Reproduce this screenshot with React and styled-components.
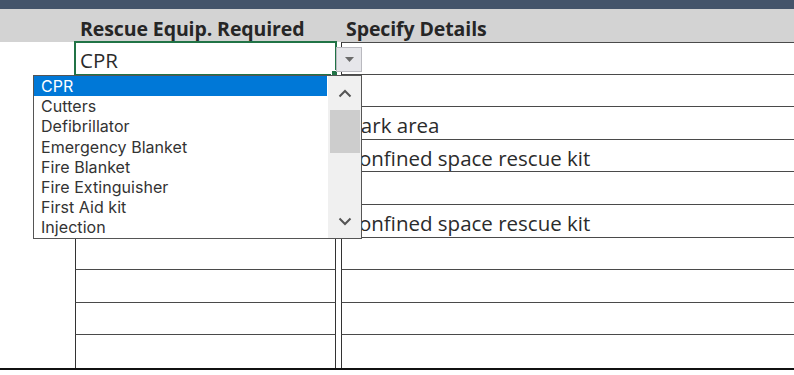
import React from "react";
import styled, { createGlobalStyle } from "styled-components";

const Global = createGlobalStyle`
  html, body { margin: 0; padding: 0; background: #fff; }
  body { font-family: "Open Sans", "Noto Sans", sans-serif; overflow: hidden; }
`;

const Page = styled.div`
  position: relative;
  width: 794px;
  height: 375px;
  overflow: hidden;
  background: #fff;
`;

const TopBar = styled.div`
  height: 9px;
  background: #44546a;
`;

const HeaderBand = styled.div`
  height: 33px;
  background: #d3d3d3;
  display: grid;
  grid-template-columns: 75px 266px 1fr;
  align-items: end;
`;

const HeaderLabel = styled.div`
  grid-column: ${(p) => p.$col};
  padding-left: ${(p) => p.$pad}px;
  font-family: "Open Sans", sans-serif;
  font-weight: 700;
  font-size: 19.5px;
  line-height: 27px;
  letter-spacing: -0.1px;
  color: #262626;
  white-space: nowrap;
`;

const Body = styled.div`
  display: flex;
  flex-direction: column;
`;

const Row = styled.div`
  display: grid;
  grid-template-columns: 75px 261px 5px 1fr;
  height: 32.6px;
`;

const Blank = styled.div``;

const Cell = styled.div`
  position: relative;
  box-sizing: border-box;
  border-bottom: ${(p) => (p.$last ? "none" : "1px solid #4a4a4a")};
  border-top: ${(p) => (p.$first ? "1px solid #4a4a4a" : "none")};
  border-left: 1px solid #333;
  border-right: ${(p) => (p.$right ? "1px solid #333" : "none")};
  display: flex;
  align-items: center;
  padding-left: 4px;
  padding-top: 5px;
  font-family: "Open Sans", sans-serif;
  font-size: 20.5px;
  letter-spacing: 0px;
  color: #2b2b2b;
  white-space: nowrap;
  overflow: hidden;
  ${(p) =>
    p.$active &&
    `outline: 2px solid #217346; outline-offset: -1px; z-index: 2; overflow: visible; padding-top: 3px;`}
`;

const Handle = styled.span`
  position: absolute;
  right: -3px;
  bottom: -3px;
  width: 5px;
  height: 5px;
  background: #217346;
  border: 1px solid #fff;
`;

const BottomRule = styled.div`
  height: 2px;
  background: #111;
`;

const DropButton = styled.div`
  position: absolute;
  left: 336px;
  top: 47px;
  width: 26px;
  height: 25px;
  box-sizing: border-box;
  background: #e6e6ea;
  border: 1px solid #b9b9bf;
  display: flex;
  align-items: center;
  justify-content: center;
  z-index: 3;
`;

const ListBox = styled.div`
  position: absolute;
  left: 33px;
  top: 75px;
  width: 329px;
  height: 164px;
  box-sizing: border-box;
  border: 1px solid #555;
  background: #fff;
  display: flex;
  z-index: 4;
`;

const Items = styled.div`
  flex: 1;
  display: flex;
  flex-direction: column;
`;

const Item = styled.div`
  height: 20.2px;
  line-height: 20.2px;
  padding-left: 7px;
  font-family: Inter, "Open Sans", sans-serif;
  font-size: 16px;
  letter-spacing: 0.05px;
  color: ${(p) => (p.$selected ? "#fff" : "#333")};
  background: ${(p) => (p.$selected ? "#0078d7" : "transparent")};
  margin-right: 1px;
  white-space: nowrap;
`;

const Scrollbar = styled.div`
  width: 33px;
  background: #f0f0f0;
  display: flex;
  flex-direction: column;
  align-items: center;
`;

const ScrollArrow = styled.div`
  height: 34px;
  width: 100%;
  display: flex;
  align-items: center;
  justify-content: center;
`;

const Thumb = styled.div`
  width: 30px;
  height: 43px;
  background: #cdcdcd;
`;

const Track = styled.div`
  flex: 1;
`;

const items = [
  "CPR",
  "Cutters",
  "Defibrillator",
  "Emergency Blanket",
  "Fire Blanket",
  "Fire Extinguisher",
  "First Aid kit",
  "Injection",
];

const details = ["", "", "Dark area", "Confined space rescue kit", "", "Confined space rescue kit", "", "", "", ""];

export default function App() {
  return (
    <Page>
      <Global />
      <TopBar />
      <HeaderBand>
        <HeaderLabel $col={2} $pad={5}>Rescue Equip. Required</HeaderLabel>
        <HeaderLabel $col={3} $pad={5}>Specify Details</HeaderLabel>
      </HeaderBand>
      <Body>
        {details.map((d, i) => (
          <Row key={i}>
            <Blank />
            <Cell $first={i === 0} $last={i === 9} $right $active={i === 0}>
              {i === 0 ? "CPR" : ""}
              {i === 0 && <Handle />}
            </Cell>
            <Blank />
            <Cell $first={i === 0} $last={i === 9}>{d}</Cell>
          </Row>
        ))}
      </Body>
      <BottomRule />
      <DropButton>
        <svg width="11" height="7" viewBox="0 0 11 7">
          <path d="M1 1 L10 1 L5.5 6 Z" fill="#6b6b6b" />
        </svg>
      </DropButton>
      <ListBox>
        <Items>
          {items.map((t, i) => (
            <Item key={t} $selected={i === 0}>{t}</Item>
          ))}
        </Items>
        <Scrollbar>
          <ScrollArrow>
            <svg width="14" height="9" viewBox="0 0 14 9">
              <path d="M1.5 7.5 L7 2 L12.5 7.5" fill="none" stroke="#555" strokeWidth="2" />
            </svg>
          </ScrollArrow>
          <Thumb />
          <Track />
          <ScrollArrow>
            <svg width="14" height="9" viewBox="0 0 14 9">
              <path d="M1.5 1.5 L7 7 L12.5 1.5" fill="none" stroke="#555" strokeWidth="2" />
            </svg>
          </ScrollArrow>
        </Scrollbar>
      </ListBox>
    </Page>
  );
}
